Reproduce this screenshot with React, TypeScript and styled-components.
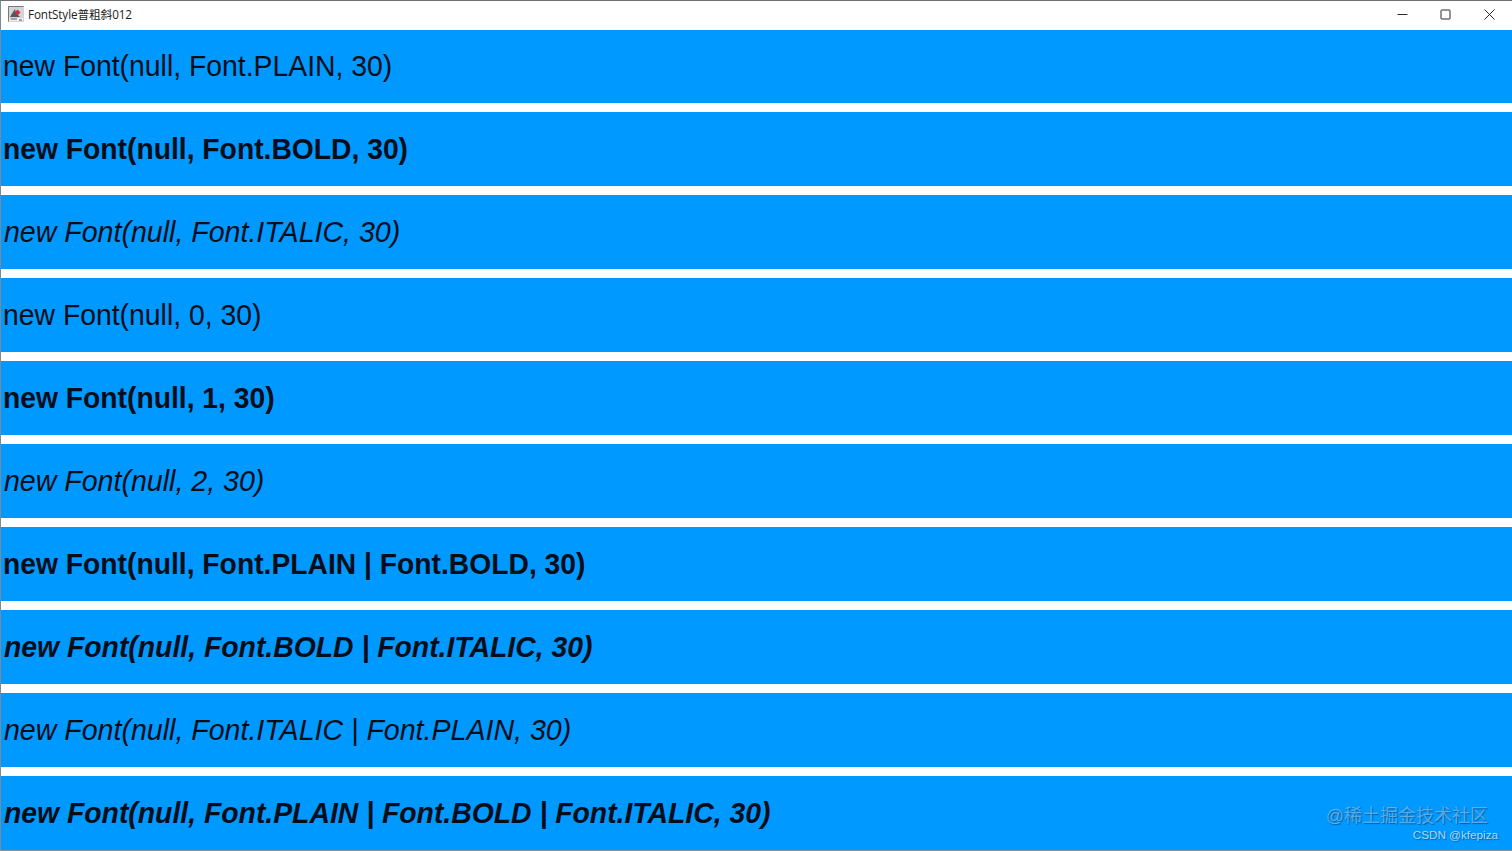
import React from 'react';
import styled, { createGlobalStyle } from 'styled-components';

const GlobalStyle = createGlobalStyle`
  html, body {
    margin: 0;
    padding: 0;
    background: #ffffff;
  }
`;

const Window = styled.div`
  width: 1512px;
  height: 851px;
  box-sizing: border-box;
  display: flex;
  flex-direction: column;
  overflow: hidden;
  position: relative;
  background: #ffffff;
  border-left: 1px solid #7a8a96;
  border-bottom: 1px solid #8a949c;
  border-top: 1px solid #6f6f6f;
  font-family: 'Liberation Sans', Arial, sans-serif;
`;

const TitleBar = styled.div`
  height: 28.5px;
  flex: none;
  display: flex;
  align-items: center;
  padding-left: 7px;
  padding-bottom: 2px;
  box-sizing: border-box;
  background: #ffffff;
`;

const AppIcon = styled.svg`
  width: 16px;
  height: 16px;
  flex: none;
`;

const Title = styled.span`
  margin-left: 4px;
  margin-bottom: 1px;
  font-family: 'Open Sans', 'Noto Sans CJK SC', sans-serif;
  font-size: 11.7px;
  color: #1c1c1c;
  letter-spacing: -0.1px;
`;

const WindowControls = styled.div`
  margin-left: auto;
  display: flex;
  height: 100%;
  padding-right: 1px;
`;

const ControlButton = styled.div`
  width: 43.5px;
  height: 100%;
  display: flex;
  align-items: center;
  justify-content: center;
  color: #2a2a2a;
`;

const Rows = styled.div`
  flex: 1;
  display: grid;
  grid-template-rows: repeat(10, 1fr);
  row-gap: 9px;
  padding-bottom: 0.5px;
`;

const Row = styled.div`
  background: #0099ff;
  display: flex;
  align-items: center;
  padding-left: 2px;
`;

// Java's hinted Arial runs narrower than the browser's at the same height
const RowText = styled.span<{ $bold?: boolean; $italic?: boolean }>`
  font-size: 30px;
  color: #050d18;
  white-space: pre;
  font-weight: ${(p) => (p.$bold ? 700 : 400)};
  font-style: ${(p) => (p.$italic ? 'italic' : 'normal')};
  transform-origin: left center;
  transform: scaleX(${(p) => (p.$italic && !p.$bold ? 0.952 : p.$bold && !p.$italic ? 0.942 : 0.945)})
    translateX(${(p) => (p.$italic ? 1 : 0)}px);
`;

const Watermark = styled.div`
  position: absolute;
  right: 14px;
  bottom: 8px;
  display: flex;
  flex-direction: column;
  align-items: flex-end;
`;

const WatermarkMain = styled.span`
  margin-right: 10px;
  font-family: 'Liberation Sans', 'Noto Sans CJK SC', sans-serif;
  font-size: 18px;
  line-height: 24px;
  color: rgba(130, 190, 232, 0.7);
  text-shadow: 1px 1px 1px rgba(0, 60, 120, 0.6);
`;

const WatermarkSub = styled.span`
  font-size: 11.7px;
  line-height: 14px;
  color: rgba(205, 232, 250, 0.85);
  text-shadow: 1px 1px 1px rgba(0, 60, 120, 0.6);
`;

const rows = [
  { text: 'new Font(null, Font.PLAIN, 30)' },
  { text: 'new Font(null, Font.BOLD, 30)', bold: true },
  { text: 'new Font(null, Font.ITALIC, 30)', italic: true },
  { text: 'new Font(null, 0, 30)' },
  { text: 'new Font(null, 1, 30)', bold: true },
  { text: 'new Font(null, 2, 30)', italic: true },
  { text: 'new Font(null, Font.PLAIN | Font.BOLD, 30)', bold: true },
  { text: 'new Font(null, Font.BOLD | Font.ITALIC, 30)', bold: true, italic: true },
  { text: 'new Font(null, Font.ITALIC | Font.PLAIN, 30)', italic: true },
  { text: 'new Font(null, Font.PLAIN | Font.BOLD | Font.ITALIC, 30)', bold: true, italic: true },
];

export default function App() {
  return (
    <>
      <GlobalStyle />
      <Window>
        <TitleBar>
          <AppIcon viewBox="0 0 16 16">
            <rect x="0" y="0" width="16" height="16" fill="#d4d4d8" />
            <path d="M0.5 15.5V0.5H15.5" fill="none" stroke="#77777e" />
            <path d="M2 11 L5 6 L7 3 L8 7 L12 11 Z" fill="#55555f" />
            <path d="M9.5 3.5 L12.5 6.5 L9.5 9.5 L6.5 6.5 Z" fill="#c2353f" />
            <path d="M1 12 H15 V15 H1 Z" fill="#f2f2f2" />
            <path d="M2.5 13 H9 M11 14 H14" stroke="#4e4e56" />
          </AppIcon>
          <Title>FontStyle普粗斜012</Title>
          <WindowControls>
            <ControlButton>
              <svg width="11" height="11" viewBox="0 0 11 11">
                <path d="M0.5 5.5H10.5" stroke="currentColor" />
              </svg>
            </ControlButton>
            <ControlButton>
              <svg width="11" height="11" viewBox="0 0 11 11">
                <rect x="1" y="1" width="9" height="9" rx="0.5" fill="none" stroke="currentColor" />
              </svg>
            </ControlButton>
            <ControlButton>
              <svg width="11" height="11" viewBox="0 0 11 11">
                <path d="M0.5 0.5L10.5 10.5M10.5 0.5L0.5 10.5" stroke="currentColor" />
              </svg>
            </ControlButton>
          </WindowControls>
        </TitleBar>
        <Rows>
          {rows.map((r) => (
            <Row key={r.text}>
              <RowText $bold={r.bold} $italic={r.italic}>
                {r.text}
              </RowText>
            </Row>
          ))}
        </Rows>
        <Watermark>
          <WatermarkMain>@稀土掘金技术社区</WatermarkMain>
          <WatermarkSub>CSDN @kfepiza</WatermarkSub>
        </Watermark>
      </Window>
    </>
  );
}
